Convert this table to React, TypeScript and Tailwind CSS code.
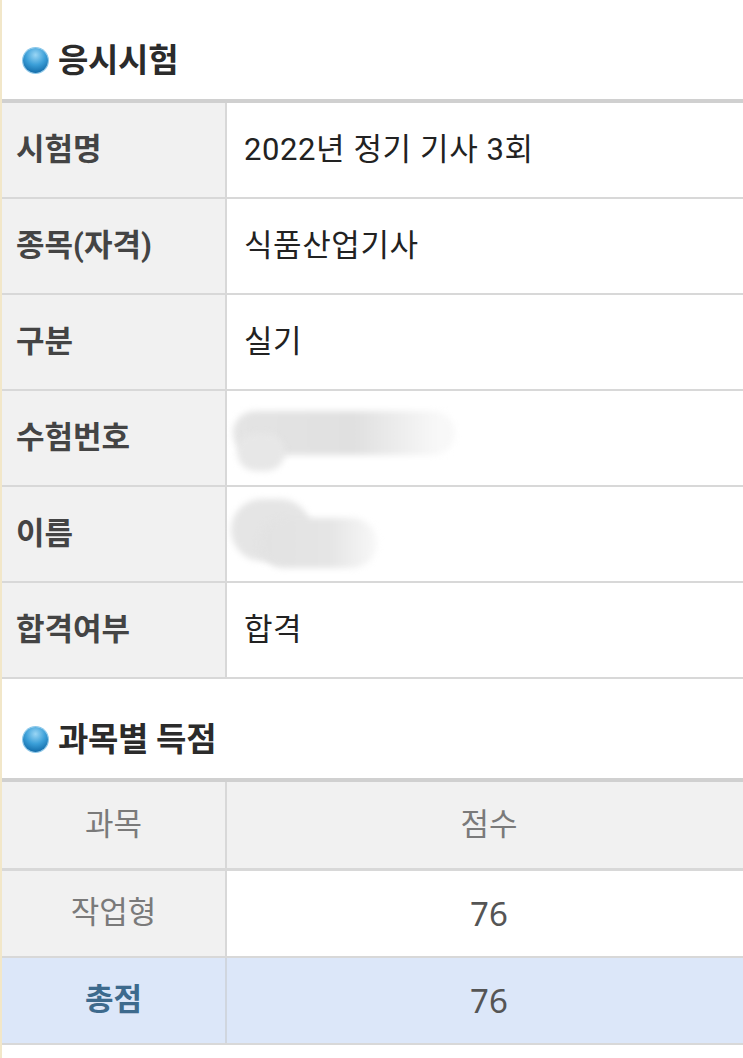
const font = "font-['Roboto','Noto_Sans_CJK_KR',sans-serif]"

const infoRows = [
  { label: "시험명", value: "2022년 정기 기사 3회" },
  { label: "종목(자격)", value: "식품산업기사" },
  { label: "구분", value: "실기" },
  { label: "수험번호", value: "", blur: "long" },
  { label: "이름", value: "", blur: "short" },
  { label: "합격여부", value: "합격" },
]

function Bullet() {
  return (
    <span className="inline-block w-[25px] h-[25px] rounded-full bg-[radial-gradient(circle_at_50%_28%,#9ad6f5_0%,#3b9fd8_45%,#1670ad_80%,#5fb3e0_100%)] shadow-[0_0_0_1px_#8cc8ea]" />
  )
}

function SectionTitle({ title }: { title: string }) {
  return (
    <div className="h-[99px] flex items-center gap-[10px] pl-[21px] pt-[22px]">
      <Bullet />
      <h2 className="text-[33px] font-bold text-[#2b2b2b] tracking-[-0.3px]">{title}</h2>
    </div>
  )
}

function Smudge({ kind }: { kind?: string }) {
  if (kind === "long") {
    return (
      <div className="relative w-[230px] h-[70px] -ml-[13px]">
        <div className="absolute left-[2px] top-[8px] w-[222px] h-[44px] rounded-full bg-[linear-gradient(90deg,#e4e4e4_0%,#e0e0e0_55%,#f8f8f8_92%)] blur-[3px]" />
        <div className="absolute left-[6px] top-[30px] w-[48px] h-[38px] rounded-full bg-[#e7e7e7] blur-[3px]" />
      </div>
    )
  }
  return (
    <div className="relative w-[160px] h-[80px] -ml-[15px]">
      <div className="absolute left-[2px] top-[5px] w-[80px] h-[62px] rounded-full bg-[#e5e5e5] blur-[3px]" />
      <div className="absolute left-[30px] top-[24px] w-[118px] h-[50px] rounded-full bg-[linear-gradient(90deg,#e2e2e2_0%,#e5e5e5_60%,#f8f8f8_100%)] blur-[3px]" />
    </div>
  )
}

export default function App() {
  return (
    <main className={`w-[743px] min-h-[1058px] bg-white border-l-2 border-[#f2e7c9] ${font}`}>
      <SectionTitle title="응시시험" />
      <section className="border-t-4 border-[#d0d0d0]">
        {infoRows.map((row) => (
          <div key={row.label} className="grid grid-cols-[225px_1fr] h-[96px] border-b-2 border-[#d8d8d8]">
            <div className="bg-[#f1f1f1] border-r-2 border-[#d8d8d8] flex items-center pl-[14px] text-[31px] font-bold text-[#444]">
              {row.label}
            </div>
            <div className="flex items-center pl-[17px] text-[31px] tracking-[0.6px] text-[#222]">
              {row.blur ? <Smudge kind={row.blur} /> : row.value}
            </div>
          </div>
        ))}
      </section>

      <SectionTitle title="과목별 득점" />
      <section className="border-t-4 border-[#d0d0d0] text-[31px]">
        <div className="grid grid-cols-[225px_1fr] h-[89px] border-b-[3px] border-[#d8d8d8] bg-[#f1f1f1] text-[#7a7a7a]">
          <div className="border-r-2 border-[#d8d8d8] flex items-center justify-center">과목</div>
          <div className="flex items-center justify-center pl-[8px]">점수</div>
        </div>
        <div className="grid grid-cols-[225px_1fr] h-[87px] border-b-2 border-[#d8d8d8]">
          <div className="bg-[#f1f1f1] border-r-2 border-[#d8d8d8] flex items-center justify-center text-[#7a7a7a]">작업형</div>
          <div className="flex items-center justify-center pl-[8px] text-[33px] text-[#555] font-['Noto_Sans',sans-serif]">76</div>
        </div>
        <div className="grid grid-cols-[225px_1fr] h-[87px] border-b-2 border-[#d8d8d8] bg-[#dce7f9]">
          <div className="border-r-2 border-[#d0d6df] flex items-center justify-center font-bold text-[#3d6a8d]">총점</div>
          <div className="flex items-center justify-center pl-[8px] text-[33px] text-[#555] font-['Noto_Sans',sans-serif]">76</div>
        </div>
      </section>
    </main>
  )
}
